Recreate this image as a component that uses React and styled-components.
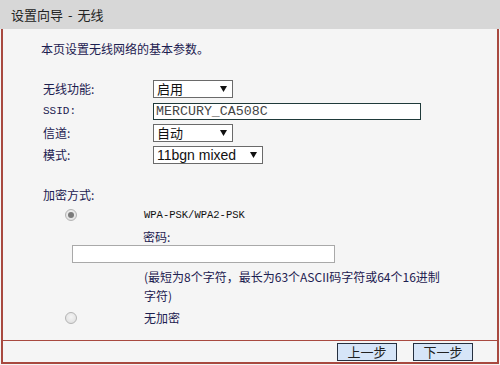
import React from "react";
import styled, { createGlobalStyle } from "styled-components";

const Global = createGlobalStyle`
  html, body { margin: 0; padding: 0; background: #f5f5f5; }
  body { font-family: "Noto Sans CJK SC", "Liberation Sans", sans-serif; color: #1c2050; }
  * { box-sizing: border-box; }
`;

const Page = styled.div`
  width: 500px;
  height: 365px;
  display: flex;
  flex-direction: column;
  overflow: hidden;
`;

const Header = styled.div`
  height: 29px;
  flex: none;
  background: #d7d7d7;
  padding-left: 11px;
  display: flex;
  align-items: center;
  gap: 5px;
  font-size: 13px;
  color: #222;
`;

const Panel = styled.div`
  height: 312px;
  flex: none;
  margin: 0 1px;
  border-left: 2px solid #a8493f;
  border-right: 2px solid #a8493f;
  border-bottom: 1px solid #a8493f;
  background: #f5f5f5;
  padding-top: 12px;
  display: flex;
  flex-direction: column;
`;

const Text = styled.div`
  font-size: 12px;
  line-height: ${(p) => p.$lh || 16}px;
  margin-left: ${(p) => p.$ml || 0}px;
  margin-top: ${(p) => p.$mt || 0}px;
  white-space: nowrap;
`;

const Form = styled.div`
  margin-top: 21px;
  margin-left: 40px;
  display: grid;
  grid-template-columns: 110px auto;
  grid-auto-rows: 22px;
  align-items: center;
`;

const Label = styled.div`
  line-height: 16px;
  font-family: ${(p) => (p.$mono ? '"Liberation Mono", monospace' : 'inherit')};
  font-size: ${(p) => (p.$mono ? 11 : 12)}px;
`;

const Select = styled.div`
  width: ${(p) => p.$w}px;
  height: 18px;
  background: #fff;
  border: 1px solid #6a6a6a;
  display: flex;
  align-items: center;
  justify-content: space-between;
  padding: 0 5px 0 3px;
  font-size: ${(p) => (p.$latin ? 14 : 13)}px;
  font-family: ${(p) => (p.$latin ? '"Liberation Sans", sans-serif' : 'inherit')};
  color: #111;
  line-height: 16px;
`;

const Arrow = () => (
  <svg width="7" height="6" viewBox="0 0 7 6">
    <path d="M0 0H7L3.5 6Z" fill="#111" />
  </svg>
);

const TextInput = styled.div`
  width: ${(p) => p.$w}px;
  height: ${(p) => p.$h || 17}px;
  background: #fff;
  border: 1px solid ${(p) => p.$border || "#1f3a3a"};
  margin-left: ${(p) => p.$ml || 0}px;
  margin-top: ${(p) => p.$mt || 0}px;
  padding-left: 2px;
  display: flex;
  align-items: center;
  font-family: "Liberation Mono", monospace;
  font-size: 13.3px;
  color: #444;
  flex: none;
`;

const RadioRow = styled.div`
  height: 18px;
  margin-top: ${(p) => p.$mt}px;
  padding-left: 62px;
  display: flex;
  align-items: center;
`;

const RadioCell = styled.div`
  width: 79px;
  flex: none;
  display: flex;
  align-items: center;
`;

const Radio = styled.span`
  width: 12px;
  height: 12px;
  border-radius: 50%;
  border: 1px solid #b4b4b4;
  background: radial-gradient(circle at 50% 40%, #f4f4f4, #dcdcdc);
  display: flex;
  align-items: center;
  justify-content: center;
  &::after {
    content: "";
    width: 6px;
    height: 6px;
    border-radius: 50%;
    background: ${(p) => (p.$checked ? "#7a7a7a" : "transparent")};
  }
`;

const Mono = styled.span`
  font-family: "Liberation Mono", monospace;
  font-size: 10.5px;
  color: #111;
`;

const Footer = styled.div`
  height: 23px;
  flex: none;
  margin: 0 1px;
  border-left: 2px solid #a8493f;
  border-right: 2px solid #a8493f;
  border-bottom: 2px solid #a8493f;
  background: #f5f5f5;
  display: flex;
  justify-content: flex-end;
  align-items: center;
  gap: 16px;
  padding-right: 24px;
  padding-top: 1px;
`;

const Button = styled.button`
  width: 60px;
  height: 18px;
  padding: 0;
  background: #d6e5f8;
  border: 1px solid #253040;
  font-family: "Noto Sans CJK SC", sans-serif;
  font-size: 13px;
  line-height: 16px;
  color: #222;
  cursor: pointer;
`;

export default function App() {
  return (
    <Page>
      <Global />
      <Header>
        <span>设置向导</span>
        <span>-</span>
        <span>无线</span>
      </Header>
      <Panel>
        <Text $ml={38}>本页设置无线网络的基本参数。</Text>
        <Form>
          <Label>无线功能:</Label>
          <Select $w={80}>
            <span>启用</span>
            <Arrow />
          </Select>
          <Label $mono>SSID:</Label>
          <TextInput $w={268}>MERCURY_CA508C</TextInput>
          <Label>信道:</Label>
          <Select $w={80}>
            <span>自动</span>
            <Arrow />
          </Select>
          <Label>模式:</Label>
          <Select $w={110} $latin>
            <span>11bgn mixed</span>
            <Arrow />
          </Select>
        </Form>
        <Text $ml={40} $mt={21}>加密方式:</Text>
        <RadioRow $mt={3}>
          <RadioCell>
            <Radio $checked />
          </RadioCell>
          <Mono>WPA-PSK/WPA2-PSK</Mono>
        </RadioRow>
        <Text $ml={140} $mt={5}>密码:</Text>
        <TextInput $w={263} $h={18} $ml={69} $border="#a9a9a9" />
        <Text $ml={141} $mt={4} $lh={19}>
          (最短为8个字符，最长为63个ASCII码字符或64个16进制
          <br />
          字符)
        </Text>
        <RadioRow $mt={4}>
          <RadioCell>
            <Radio />
          </RadioCell>
          <Text>无加密</Text>
        </RadioRow>
      </Panel>
      <Footer>
        <Button>上一步</Button>
        <Button>下一步</Button>
      </Footer>
    </Page>
  );
}
